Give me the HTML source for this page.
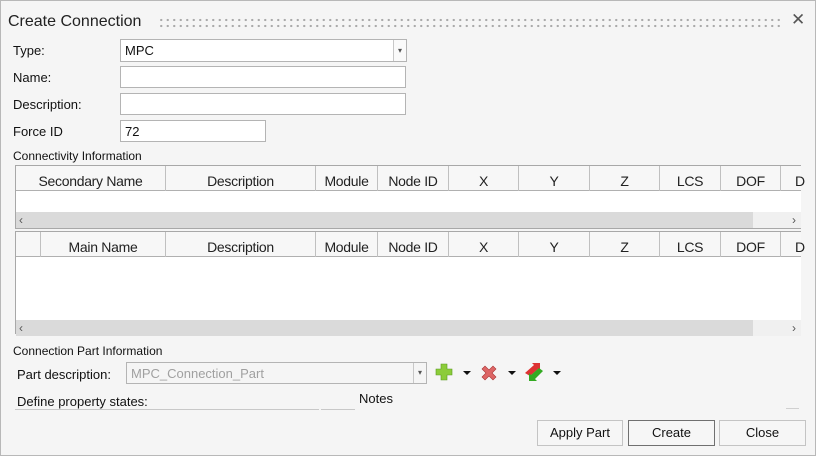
<!DOCTYPE html>
<html><head><style>
*{box-sizing:border-box;margin:0;padding:0}
body{width:816px;height:456px;background:#f5f5f5;font-family:"Liberation Sans",sans-serif;font-size:12px;color:#111;position:relative;overflow:hidden}
.win{position:absolute;left:0;top:0;width:816px;height:456px;border:1px solid #b8b8b8}
.a{position:absolute;white-space:nowrap}
.inp{position:absolute;background:#fff;border:1px solid #b4b4b4;height:22px;padding:3px 4px;font-size:12px}
.tbl{position:absolute;left:15px;width:786px;background:#fff;border:1px solid #a8a8a8;border-right:none}
.hdr{position:absolute;left:0;top:0;height:25px;width:100%;background:#f7f7f7;border-bottom:1px solid #b0b0b0}
.c{position:absolute;top:0;height:25px;border-right:1px solid #c0c0c0;text-align:center;line-height:30px;font-size:14px;color:#222;letter-spacing:-0.3px}
.sb{position:absolute;left:0;width:100%;height:16px;background:#f0f0f0}
.sb .t{position:absolute;left:0;top:0;width:737px;height:16px;background:#dadada}
.sb span{position:absolute;top:0;font-size:12px;line-height:16px;color:#555}
.btn{position:absolute;top:420px;height:26px;border:1px solid #c4c4c4;background:#f6f6f6;text-align:center;line-height:24px;font-size:13px}
.tri{position:absolute;width:0;height:0;border-left:4px solid transparent;border-right:4px solid transparent;border-top:4px solid #111}
</style></head><body>
<div class="win"></div>
<div class="a" style="left:8px;top:13px;font-size:16px;color:#222">Create Connection</div>
<div class="a" style="left:158px;top:17px;width:626px;height:12px;background-image:radial-gradient(circle,#aaa 1px,transparent 1.3px);background-size:6.5px 6px;background-position:0 0"></div>
<div class="a" style="left:791px;top:10px;font-size:17px;color:#555">✕</div>

<div class="a" style="left:13px;top:43px;font-size:13px">Type:</div>
<div class="inp" style="left:120px;top:39px;width:287px;height:23px;font-size:13px">MPC</div>
<div class="a" style="left:393px;top:40px;width:13px;height:21px;border-left:1px solid #c8c8c8;background:#fafafa;font-size:8px;text-align:center;line-height:21px;color:#555">▾</div>
<div class="a" style="left:13px;top:70px;font-size:13px">Name:</div>
<div class="inp" style="left:120px;top:66px;width:286px"></div>
<div class="a" style="left:13px;top:97px;font-size:13px">Description:</div>
<div class="inp" style="left:120px;top:93px;width:286px"></div>
<div class="a" style="left:13px;top:124px;font-size:13px">Force ID</div>
<div class="inp" style="left:120px;top:120px;width:146px;font-size:13px">72</div>
<div class="a" style="left:13px;top:149px;font-size:12px">Connectivity Information</div>

<div class="tbl" style="top:165px;height:64px">
<div class="hdr">
<div class="c" style="left:0;width:150px">Secondary Name</div>
<div class="c" style="left:150px;width:150px">Description</div>
<div class="c" style="left:300px;width:62px">Module</div>
<div class="c" style="left:362px;width:71px">Node ID</div>
<div class="c" style="left:433px;width:70px">X</div>
<div class="c" style="left:503px;width:71px">Y</div>
<div class="c" style="left:574px;width:70px">Z</div>
<div class="c" style="left:644px;width:61px">LCS</div>
<div class="c" style="left:705px;width:60px">DOF</div>
<div class="c" style="left:765px;width:30px;border:none;text-align:left;padding-left:14px">D</div>
</div>
<div class="sb" style="top:46px"><div class="t"></div><span style="left:3px">‹</span><span style="left:776px">›</span></div>
</div>

<div class="tbl" style="top:231px;height:103px">
<div class="hdr">
<div class="c" style="left:0;width:25px"></div>
<div class="c" style="left:25px;width:125px">Main Name</div>
<div class="c" style="left:150px;width:150px">Description</div>
<div class="c" style="left:300px;width:62px">Module</div>
<div class="c" style="left:362px;width:71px">Node ID</div>
<div class="c" style="left:433px;width:70px">X</div>
<div class="c" style="left:503px;width:71px">Y</div>
<div class="c" style="left:574px;width:70px">Z</div>
<div class="c" style="left:644px;width:61px">LCS</div>
<div class="c" style="left:705px;width:60px">DOF</div>
<div class="c" style="left:765px;width:30px;border:none;text-align:left;padding-left:14px">D</div>
</div>
<div class="sb" style="top:88px"><div class="t"></div><span style="left:3px">‹</span><span style="left:776px">›</span></div>
</div>

<div class="a" style="left:13px;top:344px;font-size:12px">Connection Part Information</div>
<div class="a" style="left:17px;top:367px;font-size:13px">Part description:</div>
<div class="inp" style="left:126px;top:362px;width:301px;height:22px;background:#f5f5f5;color:#a0a0a0;font-size:13px;padding-top:3px">MPC_Connection_Part</div>
<div class="a" style="left:413px;top:363px;width:13px;height:20px;border-left:1px solid #c8c8c8;font-size:8px;text-align:center;line-height:20px;color:#555">▾</div>

<svg class="a" style="left:434px;top:362px" width="20" height="20"><path d="M7 2h6v5h5v6h-5v5H7v-5H2V7h5z" fill="#8ccc3a" stroke="#5a9a20" stroke-width="0.6"/></svg>
<div class="tri" style="left:463px;top:371px"></div>
<svg class="a" style="left:479px;top:363px" width="20" height="20"><path d="M3 6l3-3 4 4 4-4 3 3-4 4 4 4-3 3-4-4-4 4-3-3 4-4z" fill="#dd6666" stroke="#aa3333" stroke-width="0.6"/></svg>
<div class="tri" style="left:508px;top:371px"></div>
<svg class="a" style="left:523px;top:361px" width="24" height="24"><path d="M2 12l9-8-2-2h8v8l-2-2-8 7z" fill="#dd3333"/><path d="M20 10l-8 8 2 2H6v-8l2 2 8-7z" fill="#33aa22"/></svg>
<div class="tri" style="left:553px;top:371px"></div>

<div class="a" style="left:17px;top:394px;font-size:13px">Define property states:</div>
<div class="a" style="left:15px;top:409px;width:304px;height:1px;background:#c8c8c8"></div>
<div class="a" style="left:321px;top:409px;width:34px;height:1px;background:#c8c8c8"></div>
<div class="a" style="left:359px;top:391px;font-size:13px">Notes</div>
<div class="a" style="left:786px;top:408px;width:13px;height:1px;background:#d0d0d0"></div>

<div class="btn" style="left:537px;width:86px">Apply Part</div>
<div class="btn" style="left:628px;width:87px;border-color:#707070">Create</div>
<div class="btn" style="left:719px;width:87px">Close</div>
</body></html>
